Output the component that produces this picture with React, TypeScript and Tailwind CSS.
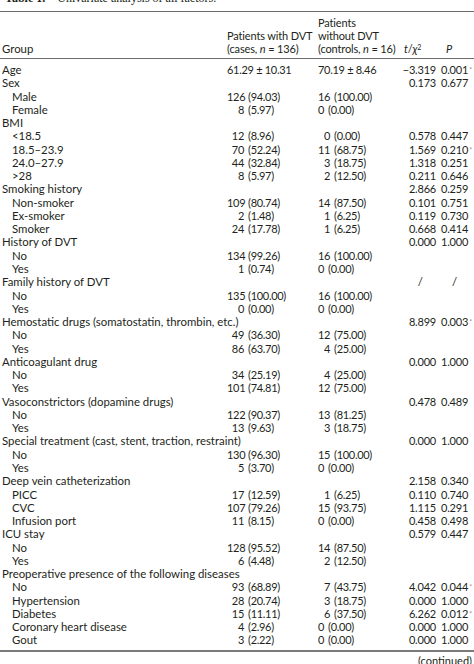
import React from "react";

type Row = [string, number, string, string, string, string];

const rows: Row[] = [
  ["Age", 0, "61.29 ± 10.31", "70.19 ± 8.46", "−3.319", "0.001*"],
  ["Sex", 0, "", "", "0.173", "0.677"],
  ["Male", 1, "126 (94.03)", "16 (100.00)", "", ""],
  ["Female", 1, "8 (5.97)", "!0 (0.00)", "", ""],
  ["BMI", 0, "", "", "", ""],
  ["<18.5", 1, "12 (8.96)", "0 (0.00)", "0.578", "0.447"],
  ["18.5–23.9", 1, "70 (52.24)", "11 (68.75)", "1.569", "0.210*"],
  ["24.0–27.9", 1, "44 (32.84)", "3 (18.75)", "1.318", "0.251"],
  [">28", 1, "8 (5.97)", "2 (12.50)", "0.211", "0.646"],
  ["Smoking history", 0, "", "", "2.866", "0.259"],
  ["Non-smoker", 1, "109 (80.74)", "14 (87.50)", "0.101", "0.751"],
  ["Ex-smoker", 1, "2 (1.48)", "1 (6.25)", "0.119", "0.730"],
  ["Smoker", 1, "24 (17.78)", "1 (6.25)", "0.668", "0.414"],
  ["History of DVT", 0, "", "", "0.000", "1.000"],
  ["No", 1, "134 (99.26)", "16 (100.00)", "", ""],
  ["Yes", 1, "1 (0.74)", "!0 (0.00)", "", ""],
  ["Family history of DVT", 0, "", "", "/", "/"],
  ["No", 1, "135 (100.00)", "16 (100.00)", "", ""],
  ["Yes", 1, "0 (0.00)", "!0 (0.00)", "", ""],
  ["Hemostatic drugs (somatostatin, thrombin, etc.)", 0, "", "", "8.899", "0.003*"],
  ["No", 1, "49 (36.30)", "12 (75.00)", "", ""],
  ["Yes", 1, "86 (63.70)", "4 (25.00)", "", ""],
  ["Anticoagulant drug", 0, "", "", "0.000", "1.000"],
  ["No", 1, "34 (25.19)", "4 (25.00)", "", ""],
  ["Yes", 1, "101 (74.81)", "12 (75.00)", "", ""],
  ["Vasoconstrictors (dopamine drugs)", 0, "", "", "0.478", "0.489"],
  ["No", 1, "122 (90.37)", "13 (81.25)", "", ""],
  ["Yes", 1, "13 (9.63)", "3 (18.75)", "", ""],
  ["Special treatment (cast, stent, traction, restraint)", 0, "", "", "0.000", "1.000"],
  ["No", 1, "130 (96.30)", "15 (100.00)", "", ""],
  ["Yes", 1, "5 (3.70)", "!0 (0.00)", "", ""],
  ["Deep vein catheterization", 0, "", "", "2.158", "0.340"],
  ["PICC", 1, "17 (12.59)", "1 (6.25)", "0.110", "0.740"],
  ["CVC", 1, "107 (79.26)", "15 (93.75)", "1.115", "0.291"],
  ["Infusion port", 1, "11 (8.15)", "!0 (0.00)", "0.458", "0.498"],
  ["ICU stay", 0, "", "", "0.579", "0.447"],
  ["No", 1, "128 (95.52)", "14 (87.50)", "", ""],
  ["Yes", 1, "6 (4.48)", "2 (12.50)", "", ""],
  ["Preoperative presence of the following diseases", 0, "", "", "", ""],
  ["No", 1, "93 (68.89)", "7 (43.75)", "4.042", "0.044*"],
  ["Hypertension", 1, "28 (20.74)", "3 (18.75)", "0.000", "1.000"],
  ["Diabetes", 1, "15 (11.11)", "6 (37.50)", "6.262", "0.012*"],
  ["Coronary heart disease", 1, "4 (2.96)", "!0 (0.00)", "0.000", "1.000"],
  ["Gout", 1, "3 (2.22)", "!0 (0.00)", "0.000", "1.000"],
];

function CountCell({ v, box }: { v: string; box: "c2" | "c3" }) {
  if (!v) return <div />;
  const plain = v.startsWith("!");
  const s = plain ? v.slice(1) : v;
  const m = s.match(/^(\d+) \((.+)\)$/);
  if (!m)
    return <div className="text-[11px] tracking-[-0.3px] whitespace-nowrap">{s}</div>;
  const boxCls = plain
    ? "inline-block"
    : box === "c2"
    ? "inline-block w-[17px] text-right"
    : "inline-block w-[12px] text-right";
  return (
    <div className="text-[11px] tracking-[-0.3px] whitespace-nowrap">
      <span className={boxCls}>{m[1]}</span>
      <span className="inline-block w-[4px]" />
      {"(" + m[2] + ")"}
    </div>
  );
}

function PCell({ v }: { v: string }) {
  if (!v) return <div />;
  if (v === "/") return <div className="pl-[16px]">/</div>;
  const star = v.endsWith("*");
  const num = star ? v.slice(0, -1) : v;
  return (
    <div className="pl-[5px] whitespace-nowrap text-[11px] tracking-[-0.2px]">
      {num}
      {star && (
        <sup className="text-[7px] text-[#b58a8a] relative top-[-1px] ml-[1px]">
          *
        </sup>
      )}
    </div>
  );
}

function TCell({ v }: { v: string }) {
  if (!v) return <div />;
  if (v === "/") return <div className="text-right pr-[13px]">/</div>;
  return (
    <div className="text-right whitespace-nowrap text-[11px] tracking-[-0.2px]">{v}</div>
  );
}

export default function App() {
  return (
    <div
      className="w-[474px] h-[664px] overflow-hidden bg-white text-[#231f20]"
      style={{ fontFamily: "Lato, 'Open Sans', sans-serif" }}
    >
      <div className="h-[11px] overflow-hidden">
        <div
          className="-mt-[8px] pl-[5px] text-[12px] leading-[12px] whitespace-nowrap"
          style={{ fontFamily: "'Liberation Serif', serif" }}
        >
          <span className="font-bold">Table 1.</span>
          <span>{"\u2003Univariate analysis of all factors."}</span>
        </div>
      </div>
      <div className="border-t border-[#6b6b6b]" />
      <div className="grid grid-cols-[225px_91px_78px_40px_1fr] pl-[2px] pt-[4px] pb-[3px] text-[11px] tracking-[-0.15px] leading-[13px] items-end">
        <div className="text-[11.4px] tracking-normal">Group</div>
        <div className="whitespace-nowrap">
          <div>Patients with DVT</div>
          <div>
            (cases, <i>n</i> = 136)
          </div>
        </div>
        <div className="whitespace-nowrap">
          <div>Patients</div>
          <div>without DVT</div>
          <div>
            (controls, <i>n</i> = 16)
          </div>
        </div>
        <div className="pl-[8px] whitespace-nowrap">
          <i>t</i>/<i>χ</i>
          <sup className="text-[7px]">2</sup>
        </div>
        <div className="pl-[10px]">
          <i>P</i>
        </div>
      </div>
      <div className="border-t border-[#6b6b6b]" />
      <div className="pt-[4px] pb-[3px] pl-[2px] text-[11.4px] leading-[13.28px]">
        {rows.map((r, i) => (
          <div
            key={i}
            className="grid grid-cols-[225px_91px_78px_40px_1fr] h-[13.28px]"
          >
            <div className={r[1] ? "pl-[10px] whitespace-nowrap" : "whitespace-nowrap"}>
              {r[0]}
            </div>
            <CountCell v={r[2]} box="c2" />
            <CountCell v={r[3]} box="c3" />
            <TCell v={r[4]} />
            <PCell v={r[5]} />
          </div>
        ))}
      </div>
      <div className="border-t-2 border-[#7a7a7a]" />
      <div className="pt-[2px] pr-[2px] text-right text-[11px] leading-[13px]">
        (continued)
      </div>
    </div>
  );
}
